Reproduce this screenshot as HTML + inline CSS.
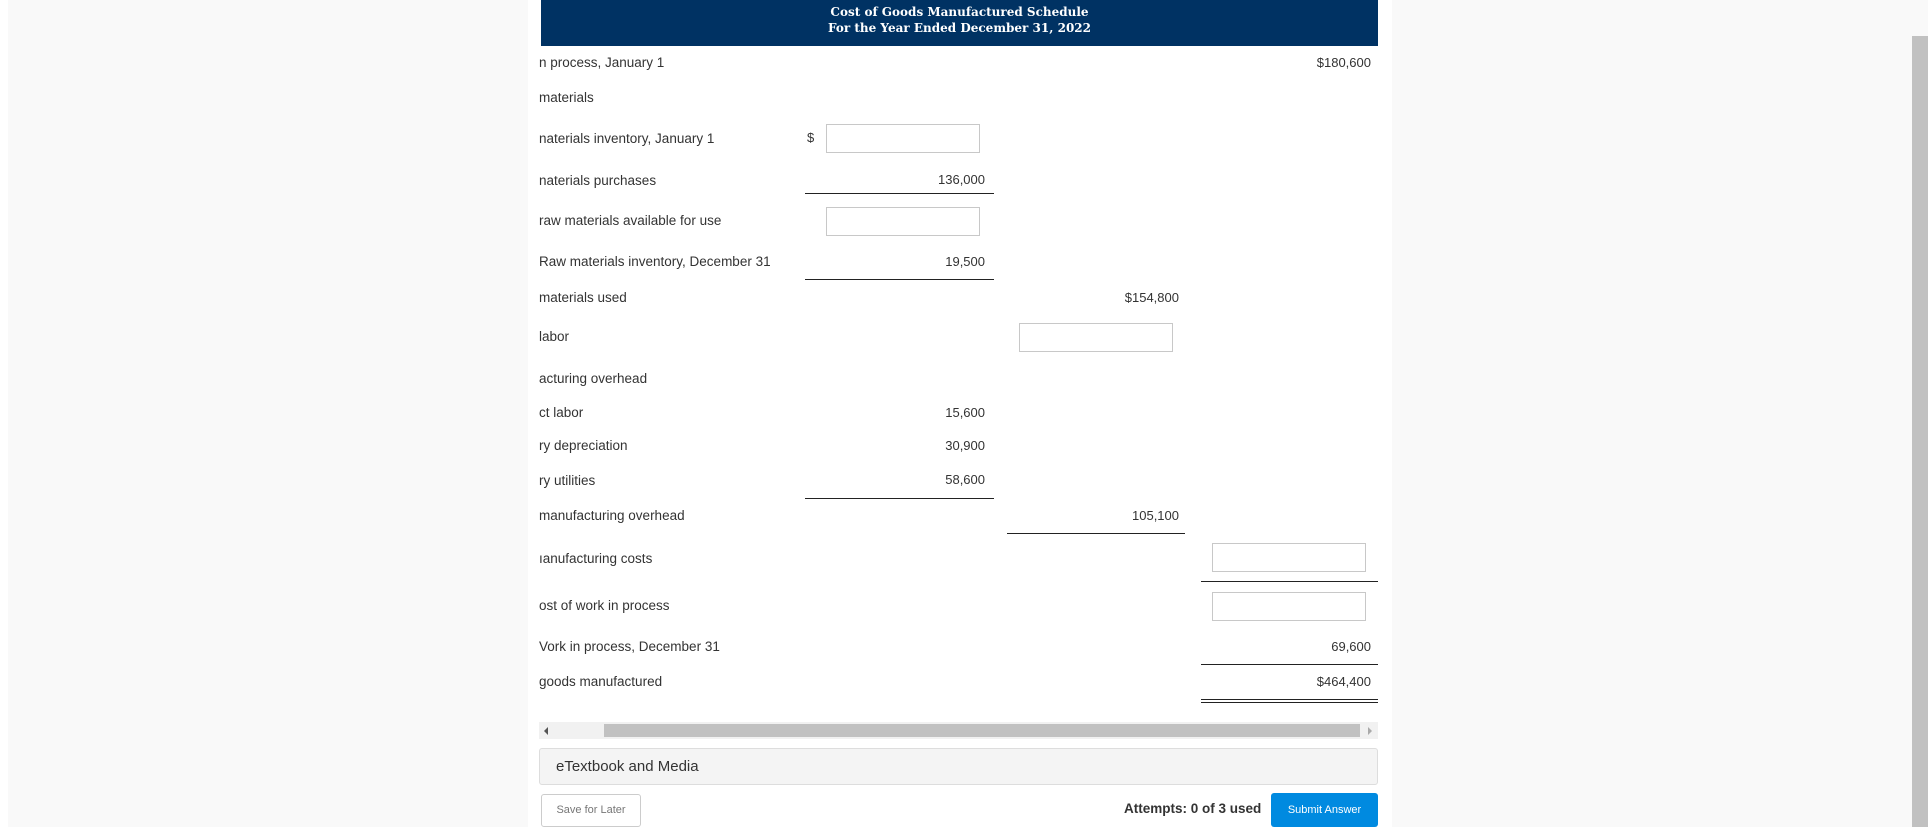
<!DOCTYPE html>
<html><head><meta charset="utf-8"><style>
*{margin:0;padding:0;box-sizing:border-box}
body{width:1928px;height:827px;background:#fff;position:relative;overflow:hidden;font-family:"Liberation Sans",sans-serif;color:#333}
.a{position:absolute}
.lbl{position:absolute;left:539px;font-size:13.5px;line-height:16px;white-space:nowrap}
.num{position:absolute;font-size:13px;line-height:16px;text-align:right;width:150px}
.inp{position:absolute;width:154px;height:29px;border:1px solid #c8c8c8;background:#fff}
.ln{position:absolute;height:0;border-top:1.5px solid #222}
</style></head><body>
<div class="a" style="left:8px;top:0;width:520px;height:827px;background:#f9f9f9"></div>
<div class="a" style="left:1392px;top:0;width:536px;height:827px;background:#f9f9f9"></div>
<div class="a" style="left:1912px;top:36px;width:16px;height:791px;background:#c1c1c1"></div>
<div class="a" style="left:529px;top:0;width:863px;height:827px;background:#fff"></div>

<div class="a" style="left:541px;top:0;width:837px;height:46px;background:#003263;color:#fff;text-align:center;font-family:'DejaVu Serif',serif;font-weight:bold;font-size:12px;line-height:16px;padding-top:4px">Cost of Goods Manufactured Schedule<br>For the Year Ended December 31, 2022</div>

<div class="lbl" style="top:55px">n process, January 1</div>
<div class="num" style="left:1221px;top:55px">$180,600</div>
<div class="lbl" style="top:90px">materials</div>
<div class="lbl" style="top:131px">naterials inventory, January 1</div>
<div class="a" style="left:807px;top:130px;font-size:13px">$</div>
<div class="inp" style="left:826px;top:124px"></div>
<div class="lbl" style="top:173px">naterials purchases</div>
<div class="num" style="left:835px;top:172px">136,000</div>
<div class="ln" style="left:805px;top:193px;width:189px"></div>
<div class="lbl" style="top:213px">raw materials available for use</div>
<div class="inp" style="left:826px;top:207px"></div>
<div class="lbl" style="top:254px">Raw materials inventory, December 31</div>
<div class="num" style="left:835px;top:254px">19,500</div>
<div class="ln" style="left:805px;top:279px;width:189px"></div>
<div class="lbl" style="top:290px">materials used</div>
<div class="num" style="left:1029px;top:290px">$154,800</div>
<div class="lbl" style="top:329px">labor</div>
<div class="inp" style="left:1019px;top:323px"></div>
<div class="lbl" style="top:371px">acturing overhead</div>
<div class="lbl" style="top:405px">ct labor</div>
<div class="num" style="left:835px;top:405px">15,600</div>
<div class="lbl" style="top:438px">ry depreciation</div>
<div class="num" style="left:835px;top:438px">30,900</div>
<div class="lbl" style="top:473px">ry utilities</div>
<div class="num" style="left:835px;top:472px">58,600</div>
<div class="ln" style="left:805px;top:498px;width:189px"></div>
<div class="lbl" style="top:508px">manufacturing overhead</div>
<div class="num" style="left:1029px;top:508px">105,100</div>
<div class="ln" style="left:1007px;top:533px;width:178px"></div>
<div class="lbl" style="top:551px">ıanufacturing costs</div>
<div class="inp" style="left:1212px;top:543px"></div>
<div class="ln" style="left:1201px;top:581px;width:177px"></div>
<div class="lbl" style="top:598px">ost of work in process</div>
<div class="inp" style="left:1212px;top:592px"></div>
<div class="lbl" style="top:639px">Vork in process, December 31</div>
<div class="num" style="left:1221px;top:639px">69,600</div>
<div class="ln" style="left:1201px;top:664px;width:177px"></div>
<div class="lbl" style="top:674px">goods manufactured</div>
<div class="num" style="left:1221px;top:674px">$464,400</div>
<div class="ln" style="left:1201px;top:699px;width:177px"></div>
<div class="ln" style="left:1201px;top:702px;width:177px"></div>

<div class="a" style="left:539px;top:722px;width:839px;height:17px;background:#f1f1f1"></div>
<div class="a" style="left:604px;top:724px;width:756px;height:13px;background:#c1c1c1"></div>
<div class="a" style="left:544px;top:727px;width:0;height:0;border-top:4px solid transparent;border-bottom:4px solid transparent;border-right:4px solid #555"></div>
<div class="a" style="left:1368px;top:727px;width:0;height:0;border-top:4px solid transparent;border-bottom:4px solid transparent;border-left:4px solid #aaa"></div>

<div class="a" style="left:539px;top:748px;width:839px;height:37px;background:#f4f4f4;border:1px solid #ddd;border-radius:3px;font-size:15px;line-height:35px;padding-left:16px;color:#333">eTextbook and Media</div>
<div class="a" style="left:541px;top:794px;width:100px;height:33px;background:#fff;border:1px solid #ccc;border-radius:3px;font-size:11px;line-height:31px;text-align:center;color:#777">Save for Later</div>
<div class="a" style="left:1124px;top:801px;font-size:13.5px;font-weight:bold;color:#333">Attempts: 0 of 3 used</div>
<div class="a" style="left:1271px;top:793px;width:107px;height:34px;background:#008ae0;border-radius:3px;color:#fff;font-size:11px;line-height:34px;text-align:center">Submit Answer</div>
</body></html>
